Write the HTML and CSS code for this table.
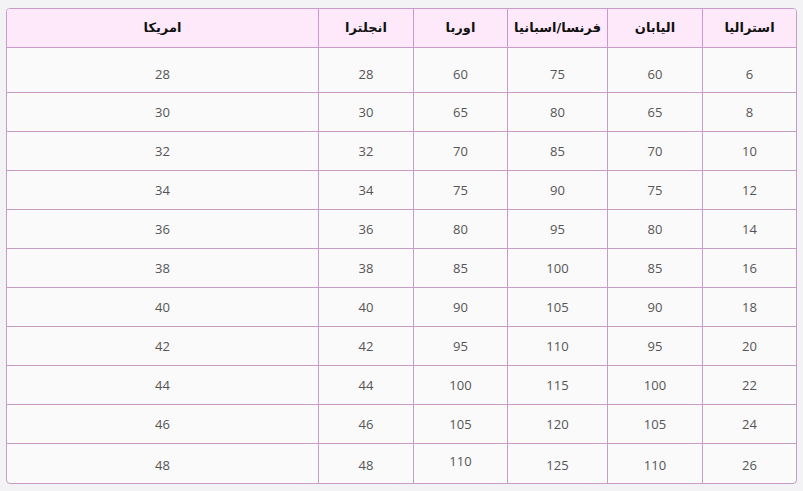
FILE: index.html
```html
<!DOCTYPE html>
<html lang="ar" dir="rtl">
<head>
<meta charset="utf-8">
<link rel="stylesheet" href="styles.css">
</head>
<body>
<div class="size-table">
  <div class="cell head">استراليا</div>
  <div class="cell head">اليابان</div>
  <div class="cell head">فرنسا/اسبانيا</div>
  <div class="cell head">اوربا</div>
  <div class="cell head">انجلترا</div>
  <div class="cell head">امريكا</div>

  <div class="cell first">6</div><div class="cell first">60</div><div class="cell first">75</div><div class="cell first">60</div><div class="cell first">28</div><div class="cell first">28</div>
  <div class="cell">8</div><div class="cell">65</div><div class="cell">80</div><div class="cell">65</div><div class="cell">30</div><div class="cell">30</div>
  <div class="cell">10</div><div class="cell">70</div><div class="cell">85</div><div class="cell">70</div><div class="cell">32</div><div class="cell">32</div>
  <div class="cell">12</div><div class="cell">75</div><div class="cell">90</div><div class="cell">75</div><div class="cell">34</div><div class="cell">34</div>
  <div class="cell">14</div><div class="cell">80</div><div class="cell">95</div><div class="cell">80</div><div class="cell">36</div><div class="cell">36</div>
  <div class="cell">16</div><div class="cell">85</div><div class="cell">100</div><div class="cell">85</div><div class="cell">38</div><div class="cell">38</div>
  <div class="cell">18</div><div class="cell">90</div><div class="cell">105</div><div class="cell">90</div><div class="cell">40</div><div class="cell">40</div>
  <div class="cell">20</div><div class="cell">95</div><div class="cell">110</div><div class="cell">95</div><div class="cell">42</div><div class="cell">42</div>
  <div class="cell">22</div><div class="cell">100</div><div class="cell">115</div><div class="cell">100</div><div class="cell">44</div><div class="cell">44</div>
  <div class="cell">24</div><div class="cell">105</div><div class="cell">120</div><div class="cell">105</div><div class="cell">46</div><div class="cell">46</div>
  <div class="cell last">26</div><div class="cell last">110</div><div class="cell last">125</div><div class="cell last raised">110</div><div class="cell last">48</div><div class="cell last">48</div>
</div>
</body>
</html>
```
FILE: styles.css
```css
html, body {
  margin: 0;
  padding: 0;
  background: #f3f3f6;
}
body {
  direction: rtl;
}
.size-table {
  margin: 8px 6px 0 0;
  width: 791px;
  box-sizing: border-box;
  border: 1px solid #c79cc6;
  border-radius: 4px;
  overflow: hidden;
  background: #fbfafb;
  display: grid;
  grid-template-columns: 94px 95px 100px 94px 95px 311px;
  grid-template-rows: 39px 45px repeat(9, 39px) 39px;
}
.cell {
  box-sizing: border-box;
  border-left: 1px solid #c79cc6;
  border-bottom: 1px solid #c79cc6;
  display: flex;
  align-items: center;
  justify-content: center;
  font-family: "Open Sans", "Liberation Sans", sans-serif;
  font-size: 13px;
  color: #555555;
}
.cell:nth-child(6n) {
  border-left: none;
}
.head {
  background: #fde9fa;
  font-family: "DejaVu Sans", "Noto Sans", sans-serif;
  font-weight: bold;
  font-size: 13px;
  color: #111111;
  padding-bottom: 1px;
}
.first {
  padding-top: 7px;
}
.last {
  border-bottom: none;
  padding-top: 2px;
}
.raised {
  padding-top: 0;
  padding-bottom: 6px;
}
```
